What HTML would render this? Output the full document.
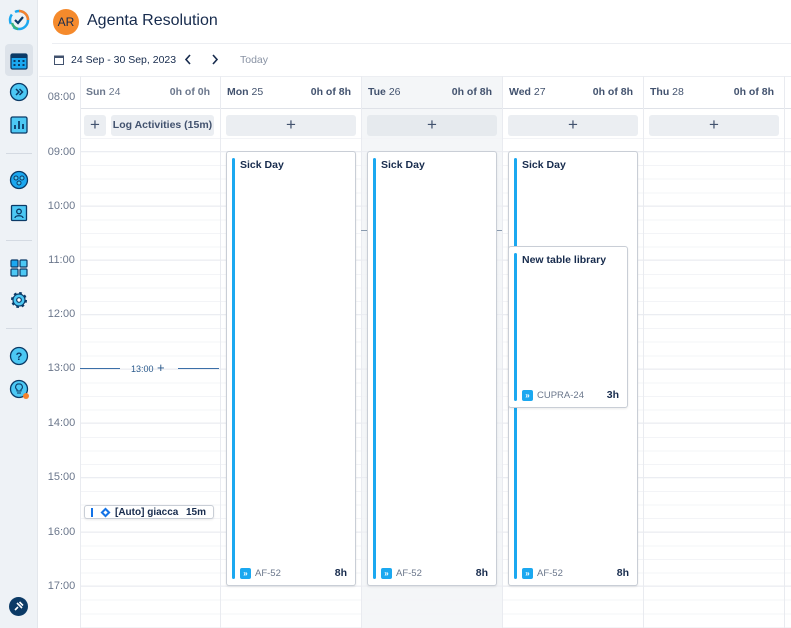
<!DOCTYPE html><html><head><style>
*{margin:0;padding:0;box-sizing:border-box}
body{width:791px;height:628px;overflow:hidden;background:#fff;font-family:"Liberation Sans",sans-serif;color:#172b4d;position:relative}
.a{position:absolute}
.side{left:0;top:0;width:38px;height:628px;background:#eef2f6;border-right:1px solid #e3e7ec}
.ic{position:absolute;left:9px;width:20px;height:20px}
.t{position:absolute;left:41px;width:41px;text-align:center;font-size:11px;color:#6b778c}
.col{position:absolute;top:76px;height:552px;border-left:1px solid #e9ebf0}
.dh{position:absolute;top:86px;font-size:10.5px;font-weight:bold;color:#42526e}
.dh span{font-weight:normal}
.hr{position:absolute;top:86px;font-size:10.5px;font-weight:bold;color:#42526e;text-align:right}
.add{position:absolute;top:115px;height:21px;background:#ebeef2;border-radius:3px;text-align:center;font-size:17px;line-height:20px;color:#42526e}
.card{position:absolute;background:#fff;border:1px solid #c9ced6;border-radius:3px;box-shadow:0 1px 2px rgba(0,0,0,.08)}
.bar{position:absolute;left:5px;width:3px;background:#1ba8f0;border-radius:2px}
.ct{position:absolute;left:13px;top:7px;font-size:10.5px;font-weight:bold;color:#172b4d}
.ft{position:absolute;left:13px;bottom:6px;font-size:9.5px;color:#6b778c;display:flex;align-items:center}
.jb{width:11px;height:11px;background:#1ba8f0;border-radius:2px;color:#fff;font-size:8px;line-height:11px;text-align:center;margin-right:4px;font-weight:bold}
.hh{position:absolute;right:8px;bottom:6px;font-size:10.5px;font-weight:bold}
</style></head><body>
<div class="a side"></div>
<svg class="ic" style="top:9px;width:22px;height:22px;left:8px" viewBox="0 0 22 22"><circle cx="11" cy="11" r="9" fill="none" stroke="#1ba8f0" stroke-width="2.5" stroke-dasharray="20 4 10 4"/><path d="M11 2a9 9 0 0 1 9 9" fill="none" stroke="#f5812c" stroke-width="2.5"/><path d="M4 14a9 9 0 0 0 6 6" fill="none" stroke="#36b37e" stroke-width="2.5"/><path d="M7 11l3 3 5-6" fill="none" stroke="#0b3a66" stroke-width="2.2"/></svg>
<div class="a" style="left:5px;top:44px;width:28px;height:32px;background:#dde3ea;border-radius:4px"></div>
<svg class="ic" style="top:51px" viewBox="0 0 20 20"><rect x="2" y="3" width="16" height="15" rx="1.5" fill="#1ba8f0" stroke="#0b3a66" stroke-width="1.3"/><rect x="2" y="3" width="16" height="4" fill="#0b3a66"/><g fill="#0b3a66"><rect x="4.5" y="9" width="2" height="2"/><rect x="9" y="9" width="2" height="2"/><rect x="13.5" y="9" width="2" height="2"/><rect x="4.5" y="13" width="2" height="2"/><rect x="9" y="13" width="2" height="2"/><rect x="13.5" y="13" width="2" height="2"/></g></svg>
<svg class="ic" style="top:82px" viewBox="0 0 20 20"><circle cx="10" cy="10" r="8.5" fill="#4cc8f4" stroke="#0b3a66" stroke-width="1.3"/><path d="M7 7l3 3-3 3M10.5 7l3 3-3 3" fill="none" stroke="#0b3a66" stroke-width="1.5"/></svg>
<svg class="ic" style="top:115px" viewBox="0 0 20 20"><rect x="2" y="2" width="16" height="16" rx="1.5" fill="#4cc8f4" stroke="#0b3a66" stroke-width="1.3"/><path d="M6 14V10M10 14V6M14 14V9" stroke="#0b3a66" stroke-width="1.8"/></svg>
<div class="a" style="left:6px;top:153px;width:26px;height:1px;background:#d4dae2"></div>
<svg class="ic" style="top:170px" viewBox="0 0 20 20"><circle cx="10" cy="10" r="8.5" fill="#1ba8f0" stroke="#0b3a66" stroke-width="1.3"/><circle cx="7" cy="8" r="2" fill="#4cc8f4" stroke="#0b3a66"/><circle cx="13" cy="8" r="2" fill="#4cc8f4" stroke="#0b3a66"/><circle cx="10" cy="13" r="2" fill="#4cc8f4" stroke="#0b3a66"/></svg>
<svg class="ic" style="top:203px" viewBox="0 0 20 20"><rect x="2.5" y="2.5" width="15" height="15" rx="1" fill="#4cc8f4" stroke="#0b3a66" stroke-width="1.3"/><circle cx="10" cy="8.5" r="2.3" fill="none" stroke="#0b3a66" stroke-width="1.3"/><path d="M6 15c0-3 8-3 8 0" fill="none" stroke="#0b3a66" stroke-width="1.3"/></svg>
<div class="a" style="left:6px;top:240px;width:26px;height:1px;background:#d4dae2"></div>
<svg class="ic" style="top:258px" viewBox="0 0 20 20"><g fill="#4cc8f4" stroke="#0b3a66" stroke-width="1.2"><rect x="2" y="2" width="7" height="7" rx="1" fill="#1ba8f0"/><rect x="11" y="2" width="7" height="7" rx="1"/><rect x="2" y="11" width="7" height="7" rx="1"/><rect x="11" y="11" width="7" height="7" rx="1"/></g></svg>
<svg class="ic" style="top:290px" viewBox="0 0 20 20"><circle cx="10" cy="10" r="6.5" fill="#4cc8f4" stroke="#0b3a66" stroke-width="3" stroke-dasharray="2.5 2.6"/><circle cx="10" cy="10" r="6" fill="#4cc8f4" stroke="#0b3a66" stroke-width="1.2"/><circle cx="10" cy="10" r="2.3" fill="#fff" stroke="#0b3a66" stroke-width="1.2"/></svg>
<div class="a" style="left:6px;top:328px;width:26px;height:1px;background:#d4dae2"></div>
<svg class="ic" style="top:346px" viewBox="0 0 20 20"><circle cx="10" cy="10" r="8.5" fill="#4cc8f4" stroke="#0b3a66" stroke-width="1.3"/><text x="10" y="14" text-anchor="middle" font-size="11" font-weight="bold" fill="#0b3a66" font-family="Liberation Sans">?</text></svg>
<svg class="ic" style="top:379px" viewBox="0 0 20 20"><circle cx="10" cy="10" r="8.5" fill="#4cc8f4" stroke="#0b3a66" stroke-width="1.3"/><path d="M8 14h4M10 5a3 3 0 0 0-2 5.5V12h4v-1.5A3 3 0 0 0 10 5z" fill="none" stroke="#0b3a66" stroke-width="1.1"/><circle cx="17" cy="17" r="3" fill="#f5812c"/></svg>
<svg class="a" style="left:9px;top:597px" width="19" height="19" viewBox="0 0 19 19"><circle cx="9.5" cy="9.5" r="9.5" fill="#0b3a66"/><path d="M8 6l5 5M10.5 5l3.5 3.5M9 10l-3 3" stroke="#fff" stroke-width="1.6"/></svg>

<div class="a" style="left:53px;top:9px;width:26px;height:26px;border-radius:50%;background:#f58a2c;color:#172b4d;font-size:12px;text-align:center;line-height:26px">AR</div>
<div class="a" style="left:87px;top:12px;font-size:16px;color:#172b4d">Agenta Resolution</div>
<div class="a" style="left:52px;top:43px;width:739px;height:1px;background:#eceef2"></div>
<svg class="a" style="left:54px;top:55px" width="10" height="10" viewBox="0 0 10 10"><rect x=".5" y="1" width="9" height="8.5" fill="none" stroke="#42526e"/><rect x=".5" y="1" width="9" height="2" fill="#42526e"/></svg>
<div class="a" style="left:71px;top:54px;font-size:10.5px;color:#172b4d">24 Sep - 30 Sep, 2023</div>
<svg class="a" style="left:184px;top:54px" width="8" height="11" viewBox="0 0 8 11"><path d="M6 1L2 5.5 6 10" fill="none" stroke="#172b4d" stroke-width="1.6"/></svg>
<svg class="a" style="left:211px;top:54px" width="8" height="11" viewBox="0 0 8 11"><path d="M2 1l4 4.5L2 10" fill="none" stroke="#172b4d" stroke-width="1.6"/></svg>
<div class="a" style="left:240px;top:54px;font-size:10.5px;color:#8993a4">Today</div>

<div class="a" style="left:361px;top:76px;width:141px;height:552px;background:#f4f6f8"></div>
<div class="a" style="left:80px;top:138px;width:711px;height:490px;background:repeating-linear-gradient(to bottom,#f3f4f7 0,#f3f4f7 1px,transparent 1px,transparent 13.58px)"></div>
<div class="a" style="left:80px;top:151px;width:711px;height:477px;background:repeating-linear-gradient(to bottom,#ebedf2 0,#ebedf2 1px,transparent 1px,transparent 54.33px)"></div>
<div class="a" style="left:39px;top:76px;width:752px;height:1px;background:#eceef2"></div>
<div class="a" style="left:80px;top:108px;width:711px;height:1px;background:#dfe2e8"></div>
<div class="col" style="left:80px"></div><div class="col" style="left:220px"></div><div class="col" style="left:361px"></div><div class="col" style="left:502px"></div><div class="col" style="left:643px"></div><div class="col" style="left:784px"></div>

<div class="t" style="top:91px">08:00</div><div class="t" style="top:146px">09:00</div><div class="t" style="top:200px">10:00</div><div class="t" style="top:254px">11:00</div><div class="t" style="top:308px">12:00</div><div class="t" style="top:362px">13:00</div><div class="t" style="top:417px">14:00</div><div class="t" style="top:471px">15:00</div><div class="t" style="top:526px">16:00</div><div class="t" style="top:580px">17:00</div>

<div class="dh" style="left:86px;color:#6b778c">Sun <span>24</span></div><div class="hr" style="left:150px;width:60px;color:#6b778c">0h of 0h</div>
<div class="dh" style="left:227px">Mon <span>25</span></div><div class="hr" style="left:290px;width:61px">0h of 8h</div>
<div class="dh" style="left:368px">Tue <span>26</span></div><div class="hr" style="left:431px;width:61px">0h of 8h</div>
<div class="dh" style="left:509px">Wed <span>27</span></div><div class="hr" style="left:572px;width:61px">0h of 8h</div>
<div class="dh" style="left:650px">Thu <span>28</span></div><div class="hr" style="left:713px;width:61px">0h of 8h</div>

<div class="add" style="left:84px;width:22px">+</div>
<div class="add" style="left:111px;width:103px;font-size:10.5px;font-weight:bold;line-height:21px">Log Activities (15m)</div>
<div class="add" style="left:226px;width:130px">+</div>
<div class="add" style="left:367px;width:130px;background:#e6eaee">+</div>
<div class="add" style="left:508px;width:130px">+</div>
<div class="add" style="left:649px;width:130px">+</div>

<div class="a" style="left:80px;top:368px;width:40px;height:1px;background:#3b6fa8"></div>
<div class="a" style="left:178px;top:368px;width:41px;height:1px;background:#3b6fa8"></div>
<div class="a" style="left:131px;top:364px;font-size:9px;color:#2b5a8c">13:00</div>
<div class="a" style="left:157px;top:360px;font-size:13px;color:#2b5a8c">+</div>
<div class="a" style="left:361px;top:230px;width:6px;height:1px;background:#8a9bb0"></div>
<div class="a" style="left:497px;top:230px;width:5px;height:1px;background:#8a9bb0"></div>

<div class="card" style="left:226px;top:151px;width:130px;height:435px"><div class="bar" style="top:6px;bottom:6px"></div><div class="ct">Sick Day</div><div class="ft"><div class="jb">»</div>AF-52</div><div class="hh">8h</div></div>
<div class="card" style="left:367px;top:151px;width:130px;height:435px"><div class="bar" style="top:6px;bottom:6px"></div><div class="ct">Sick Day</div><div class="ft"><div class="jb">»</div>AF-52</div><div class="hh">8h</div></div>
<div class="card" style="left:508px;top:151px;width:130px;height:435px"><div class="bar" style="top:6px;bottom:6px"></div><div class="ct">Sick Day</div><div class="ft"><div class="jb">»</div>AF-52</div><div class="hh">8h</div></div>
<div class="card" style="left:508px;top:246px;width:120px;height:162px"><div class="bar" style="top:6px;bottom:6px"></div><div class="ct">New table library</div><div class="ft"><div class="jb">»</div>CUPRA-24</div><div class="hh">3h</div></div>

<div class="card" style="left:84px;top:505px;width:130px;height:14px;border-radius:3px"><div class="a" style="left:6px;top:2px;width:2px;height:9px;background:#1473e6"></div><svg class="a" style="left:15px;top:1px" width="11" height="11" viewBox="0 0 11 11"><path d="M5.5 0.5L10.5 5.5 5.5 10.5 0.5 5.5z" fill="#1473e6"/><rect x="4" y="4" width="3" height="3" fill="#fff" transform="rotate(45 5.5 5.5)"/></svg><div class="a" style="left:30px;top:1px;font-size:10px;font-weight:bold">[Auto] giacca</div><div class="a" style="right:7px;top:1px;font-size:10px;font-weight:bold">15m</div></div>
</body></html>
